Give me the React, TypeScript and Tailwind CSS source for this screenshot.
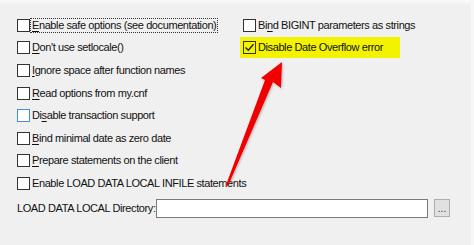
import React from 'react';

type Opt = { label: React.ReactNode; checked?: boolean; hover?: boolean; focus?: boolean; highlight?: boolean };

function u(s: string) {
  return <span className="underline underline-offset-2">{s}</span>;
}

const leftOptions: Opt[] = [
  { label: <>{u('E')}nable safe options (see documentation)</>, focus: true },
  { label: <>{u('D')}on't use setlocale()</> },
  { label: <>{u('I')}gnore space after function names</> },
  { label: <>{u('R')}ead options from my.cnf</> },
  { label: <>Di{u('s')}able transaction support</>, hover: true },
  { label: <>{u('B')}ind minimal date as zero date</> },
  { label: <>{u('P')}repare statements on the client</> },
  { label: <>Enable LOAD DATA LOCAL INFILE statements</> },
];

const rightOptions: Opt[] = [
  { label: <>Bi{u('n')}d BIGINT parameters as strings</> },
  { label: <>Disable Date Overflow error</>, checked: true, highlight: true },
];

function Box({ checked, hover }: { checked?: boolean; hover?: boolean }) {
  return (
    <span
      className={`flex h-[13px] w-[13px] shrink-0 items-center justify-center border ${
        hover ? 'border-[#3f8fe0]' : 'border-[#333333]'
      } ${checked ? 'bg-transparent' : 'bg-white'}`}
    >
      {checked && (
        <svg width="11" height="11" viewBox="0 0 11 11">
          <path d="M1.5 5.5 L4.3 8.3 L9.5 2.2" fill="none" stroke="#222" strokeWidth="1.4" />
        </svg>
      )}
    </span>
  );
}

function Row({ opt }: { opt: Opt }) {
  return (
    <div className="flex h-[22.6px] items-center">
      <div className={`flex items-center ${opt.highlight ? '-ml-[3px] bg-[#f3f300] py-[4px] pl-[3px] pr-[16px]' : ''}`}>
        <Box checked={opt.checked} hover={opt.hover} />
        <span
          className={`ml-[1px] whitespace-nowrap px-[1px] leading-[13px] ${
            opt.focus ? 'outline outline-1 outline-dotted outline-[#333]' : ''
          }`}
        >
          {opt.label}
        </span>
      </div>
    </div>
  );
}

export default function App() {
  return (
    <div
      className="relative h-[245px] w-[474px] overflow-hidden bg-[#f0f0f0] text-[11px] tracking-[-0.4px] text-[#111]"
      style={{ fontFamily: '"Liberation Sans", Arial, sans-serif' }}
    >
      <div className="h-[5px] bg-gradient-to-b from-[#fafafa] to-[#f0f0f0]" />
      <div className="flex pl-[17px] pt-[9px]">
        <div className="flex w-[226px] shrink-0 flex-col">
          {leftOptions.map((o, i) => (
            <Row key={i} opt={o} />
          ))}
        </div>
        <div className="flex flex-col">
          {rightOptions.map((o, i) => (
            <Row key={i} opt={o} />
          ))}
        </div>
      </div>
      <div className="mt-[4px] flex items-center pl-[17px]">
        <span className="w-[139px] shrink-0 whitespace-nowrap">LOAD DATA LOCAL Directory:</span>
        <div className="h-[19px] w-[272px] shrink-0 border border-[#7a7a7a] bg-white" />
        <button className="ml-[6px] flex h-[18px] w-[16px] shrink-0 items-end justify-center border border-[#adadad] bg-[#e1e1e1] pb-[3px] text-[10px] leading-[8px] tracking-normal text-[#333]">
          ...
        </button>
      </div>
      <div className="absolute right-0 top-0 h-full w-[3px] bg-[#f7f7f7]" />
      <svg className="pointer-events-none absolute left-0 top-0" width="474" height="245">
        <defs>
          <filter id="sh" x="-20%" y="-20%" width="140%" height="140%">
            <feDropShadow dx="1" dy="1" stdDeviation="1" floodColor="#000" floodOpacity="0.25" />
          </filter>
        </defs>
        <polygon
          points="282,62 281,88 273,82 228,186 226,185 265,80 261,78"
          fill="#f00000"
          filter="url(#sh)"
        />
      </svg>
    </div>
  );
}
